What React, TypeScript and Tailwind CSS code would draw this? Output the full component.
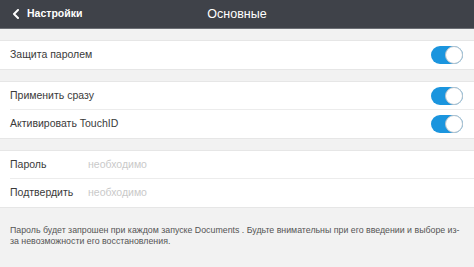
import React from 'react';

function Toggle() {
  return (
    <div className="relative h-[18px] w-[32px] rounded-full bg-[#1b95de]">
      <div className="absolute right-0 top-0 h-[18px] w-[18px] rounded-full border border-[#b9c3cb] bg-white" />
    </div>
  );
}

function SwitchRow({ label, last }: { label: string; last?: boolean }) {
  return (
    <div className="flex h-[28px] items-center bg-white pl-[10px]">
      <div
        className={`flex h-full flex-1 items-center justify-between pr-[11px] ${
          last ? '' : 'border-b border-[#ececec]'
        }`}
      >
        <span className="text-[10.5px] text-[#3a3a3a]">{label}</span>
        <Toggle />
      </div>
    </div>
  );
}

function FieldRow({ label, last }: { label: string; last?: boolean }) {
  return (
    <div className="flex h-[28px] items-center bg-white pl-[10px]">
      <div
        className={`flex h-full flex-1 items-center ${last ? '' : 'border-b border-[#ececec]'}`}
      >
        <span className="w-[78px] text-[10.5px] text-[#3a3a3a]">{label}</span>
        <span className="text-[10.5px] text-[#c9c9c9]">необходимо</span>
      </div>
    </div>
  );
}

export default function App() {
  return (
    <div
      className="flex h-[267px] w-[474px] flex-col overflow-hidden bg-[#f2f2f2]"
      style={{ fontFamily: '"Liberation Sans", Arial, sans-serif' }}
    >
      {/* Navigation bar */}
      <div className="relative flex h-[29px] shrink-0 items-center border-b border-[#6b6e74] bg-[#3f4249] px-[12px]">
        <div className="flex items-center gap-[7px] text-white">
          <svg width="8" height="10" viewBox="0 0 8 10" fill="none">
            <path d="M6 1L2 5l4 4" stroke="white" strokeWidth="2" strokeLinecap="round" strokeLinejoin="round" />
          </svg>
          <span className="text-[10.5px] font-bold">Настройки</span>
        </div>
        <div className="absolute inset-x-0 text-center text-[12.5px] text-white">Основные</div>
      </div>

      <div className="h-[12px] border-b border-[#e6e6e6]" />
      <div className="border-b border-[#e6e6e6]">
        <SwitchRow label="Защита паролем" last />
      </div>

      <div className="h-[12px] border-b border-[#e6e6e6]" />
      <div className="border-b border-[#e6e6e6]">
        <SwitchRow label="Применить сразу" />
        <SwitchRow label="Активировать TouchID" last />
      </div>

      <div className="h-[12px] border-b border-[#e6e6e6]" />
      <div className="border-b border-[#e6e6e6]">
        <FieldRow label="Пароль" />
        <FieldRow label="Подтвердить" last />
      </div>

      <div className="px-[10px] pt-[17px] text-[8.8px] leading-[10.5px] text-[#555]">
        Пароль будет запрошен при каждом запуске Documents . Будьте внимательны при его введении и выборе из-за
        невозможности его восстановления.
      </div>
    </div>
  );
}
